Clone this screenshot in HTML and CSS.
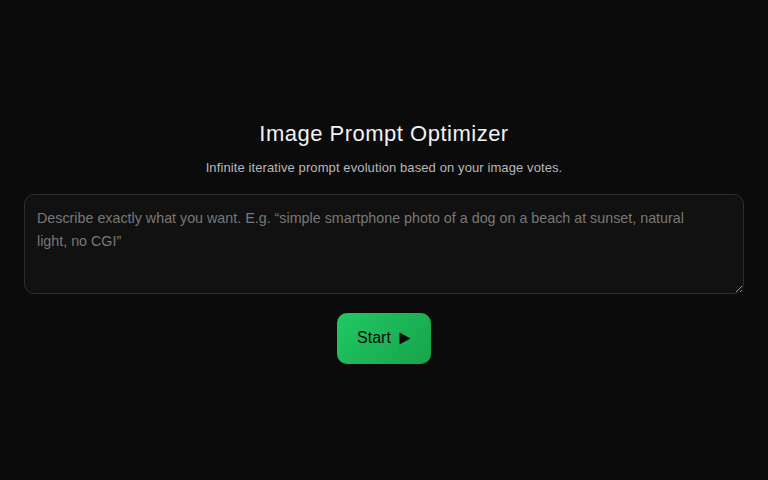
FILE: index.html
```html
<!DOCTYPE html>
<html>
<head>
<meta charset="utf-8">
<link rel="stylesheet" href="styles.css">
</head>
<body>
<main class="page">
  <section class="panel">
    <h1 class="title">Image Prompt Optimizer</h1>
    <p class="subtitle">Infinite iterative prompt evolution based on your image votes.</p>
    <textarea class="prompt" placeholder="Describe exactly what you want. E.g. “simple smartphone photo of a dog on a beach at sunset, natural light, no CGI”"></textarea>
    <button class="start">Start <svg class="play" width="12" height="13" viewBox="0 0 12 13"><path d="M0.5 0.5 L11.5 6.5 L0.5 12.5 Z" fill="currentColor"/></svg></button>
  </section>
</main>
</body>
</html>
```
FILE: styles.css
```css
html, body {
  margin: 0;
  padding: 0;
  background: #0b0b0b;
  height: 100%;
}
body {
  font-family: "Liberation Sans", Arial, sans-serif;
  color: #eaeaea;
}
.page {
  min-height: 100vh;
  display: flex;
  align-items: center;
  justify-content: center;
}
.panel {
  width: 720px;
  display: flex;
  flex-direction: column;
  align-items: center;
  margin-top: 3px;
}
.title {
  margin: 0;
  font-size: 22px;
  font-weight: 400;
  letter-spacing: 0.5px;
  line-height: 28px;
  color: #f2f2f2;
}
.subtitle {
  margin: 11px 0 0;
  font-size: 13px;
  letter-spacing: 0.1px;
  line-height: 18px;
  color: #b8b8b8;
}
.prompt {
  box-sizing: border-box;
  margin-top: 17px;
  width: 720px;
  height: 100px;
  padding: 12px 28px 12px 12px;
  background: #111111;
  border: 1px solid #2c2c2c;
  border-radius: 10px;
  color: #e0e0e0;
  font-family: "Liberation Sans", Arial, sans-serif;
  font-size: 14.3px;
  line-height: 23px;
  outline: none;
  resize: vertical;
}
.prompt::placeholder {
  color: #787878;
}
.start {
  margin-top: 19px;
  width: 94px;
  height: 51px;
  border: none;
  border-radius: 10px;
  background: linear-gradient(135deg, #22c865 0%, #16a34a 100%);
  color: #0b0b0b;
  font-family: "Liberation Sans", Arial, sans-serif;
  font-size: 16px;
  font-weight: 400;
  display: flex;
  align-items: center;
  justify-content: center;
  gap: 8px;
  cursor: pointer;
}
.play {
  display: block;
}
```
